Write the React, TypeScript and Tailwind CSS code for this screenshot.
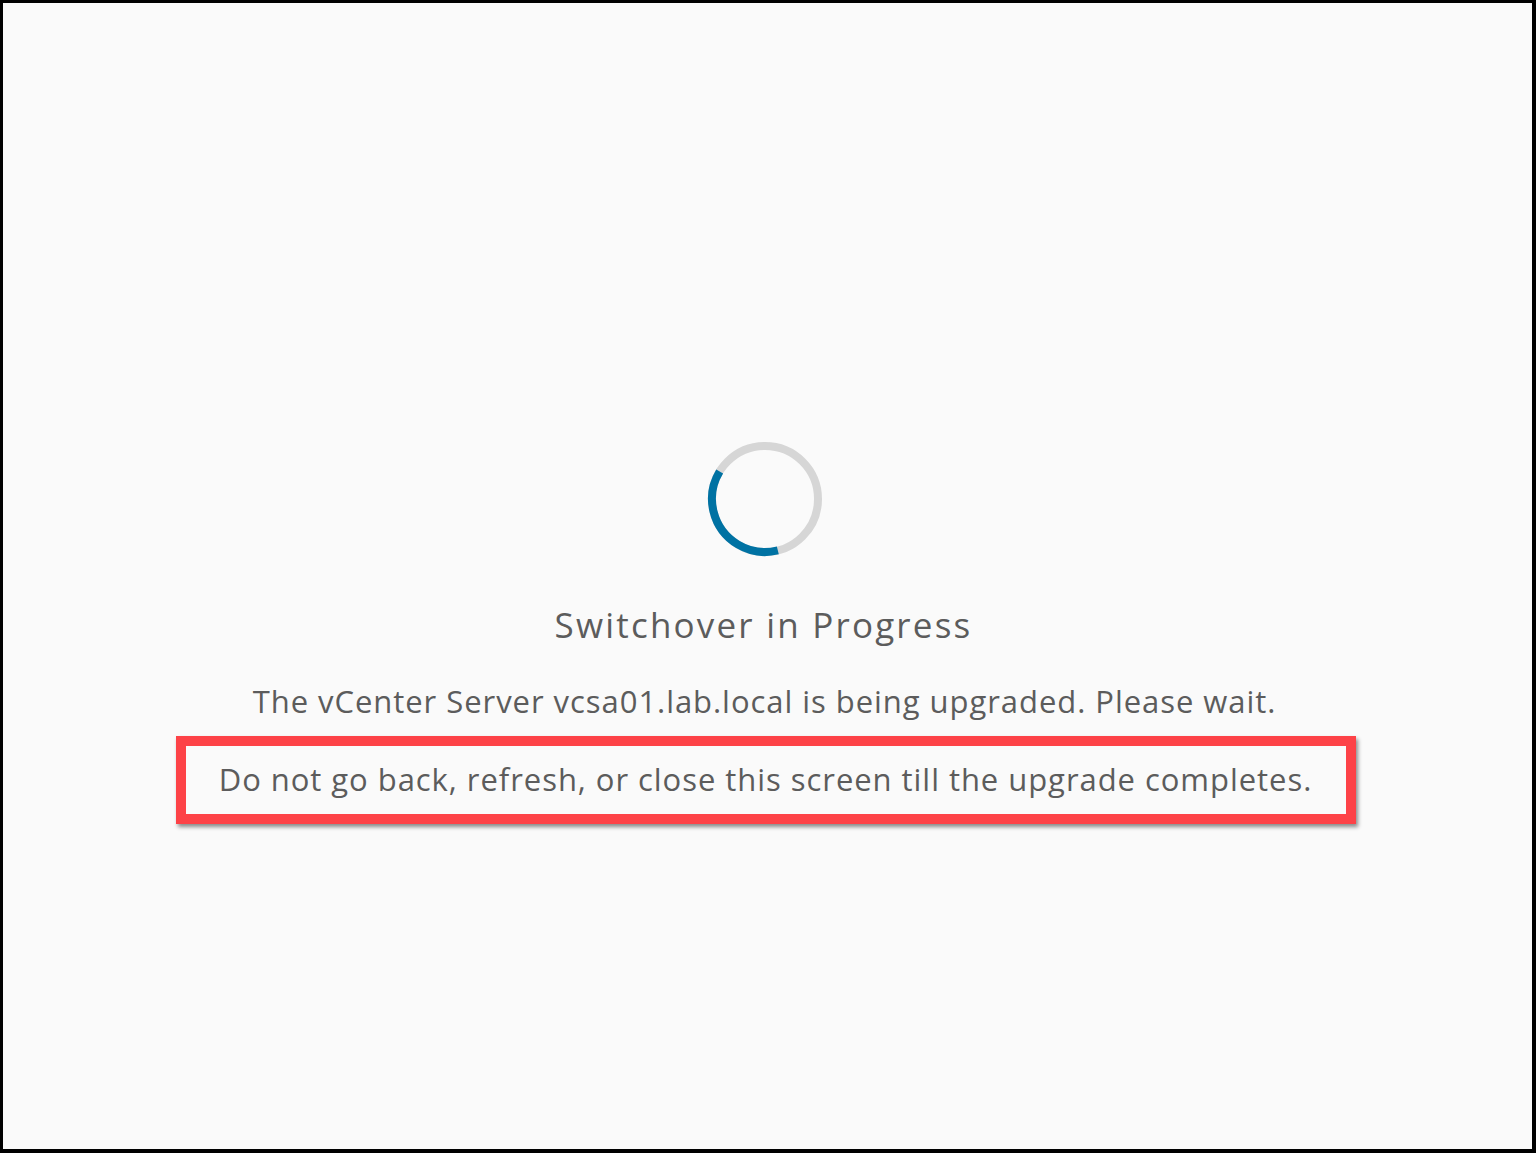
export default function App() {
  const r = 53;
  const c = 2 * Math.PI * r;
  return (
    <div className="w-[1536px] h-[1153px] bg-black pl-[3px] pt-[3px] pr-[4px] pb-[4px]">
      <div
        className="w-full h-full bg-[#fafafa] flex flex-col items-center text-[#5c5c5c]"
        style={{ fontFamily: '"Open Sans", "Liberation Sans", sans-serif' }}
      >
        <svg width="116" height="116" viewBox="0 0 116 116" className="mt-[438px] ml-[-6px]">
          <circle cx="58" cy="58" r={r} fill="none" stroke="#d6d6d6" strokeWidth="8" />
          <circle
            cx="58"
            cy="58"
            r={r}
            fill="none"
            stroke="#0072a3"
            strokeWidth="8"
            strokeDasharray={`${c * 0.375} ${c}`}
            transform="rotate(76 58 58)"
          />
        </svg>
        <h1 className="mt-[48px] text-[35px] leading-[40px] font-normal tracking-[2.2px] ml-[-8px]">
          Switchover in Progress
        </h1>
        <p className="mt-[39px] text-[31px] leading-[34px] tracking-[0.95px] ml-[-6px]">
          The vCenter Server vcsa01.lab.local is being upgraded. Please wait.
        </p>
        <div className="mt-[18px] w-[1180px] h-[88px] border-[10px] border-[#fd4247] shadow-[2px_3px_4px_rgba(0,0,0,0.45)] flex items-center justify-center ml-[-4px]">
          <p className="text-[31px] leading-[34px] tracking-[0.95px] mt-[-2px]">
            Do not go back, refresh, or close this screen till the upgrade completes.
          </p>
        </div>
      </div>
    </div>
  );
}
